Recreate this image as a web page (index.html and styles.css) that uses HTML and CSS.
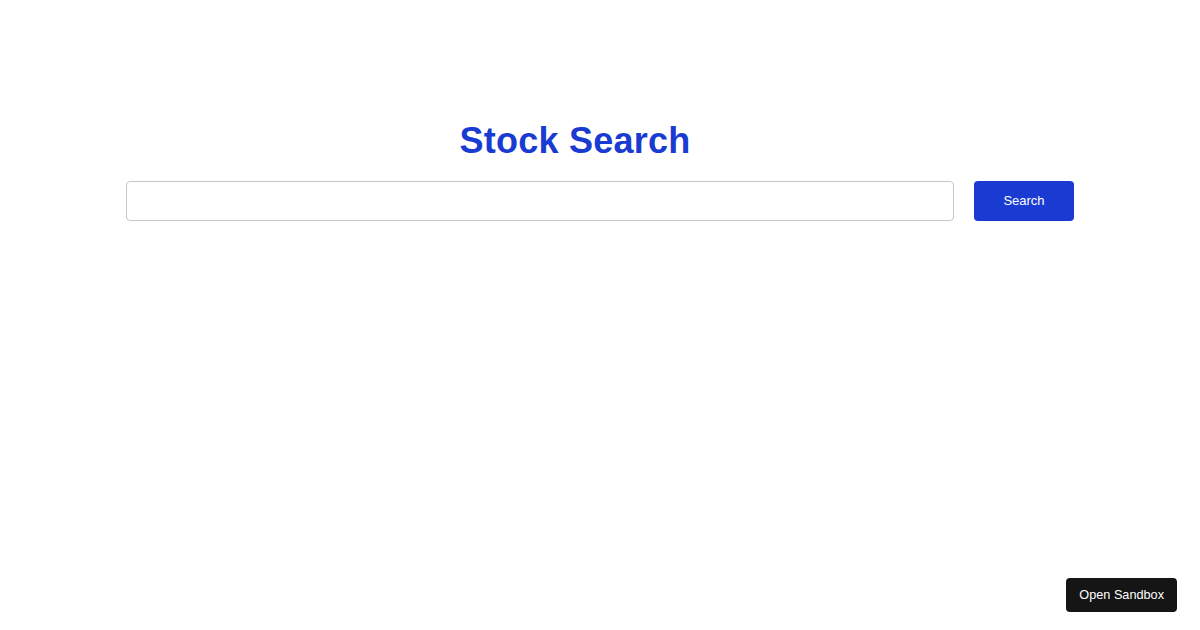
FILE: index.html
```html
<!DOCTYPE html>
<html>
<head>
<meta charset="utf-8">
<link rel="stylesheet" href="styles.css">
</head>
<body>
<main class="page">
  <h1 class="title">Stock Search</h1>
  <form class="search">
    <input class="search-input" type="text">
    <button class="search-btn" type="button">Search</button>
  </form>
</main>
<button class="sandbox-btn" type="button">Open Sandbox</button>
</body>
</html>
```

FILE: styles.css
```css
html, body {
  margin: 0;
  padding: 0;
  background: #ffffff;
  font-family: "Liberation Sans", Arial, sans-serif;
}
.page {
  width: 948px;
  margin: 0 auto;
  padding-top: 120px;
}
.title {
  margin: 0 50px 0 0;
  text-align: center;
  font-size: 36px;
  font-weight: 700;
  line-height: 42px;
  letter-spacing: 0.25px;
  color: #1a3bd1;
}
.search {
  display: flex;
  gap: 20px;
  margin-top: 19px;
}
.search-input {
  flex: 1;
  height: 40px;
  box-sizing: border-box;
  border: 1px solid #c6c6c6;
  border-radius: 4px;
  padding: 0 10px;
  font-size: 14px;
  font-family: inherit;
  outline: none;
}
.search-btn {
  width: 100px;
  height: 40px;
  border: none;
  border-radius: 4px;
  background: #1a3bd1;
  color: #ffffff;
  font-family: inherit;
  font-size: 13px;
  line-height: 39px;
  padding: 0 0 1px;
}
.sandbox-btn {
  position: fixed;
  right: 23px;
  bottom: 18px;
  height: 34px;
  padding: 0 13px;
  border: none;
  border-radius: 4px;
  background: #151515;
  color: #ffffff;
  font-family: inherit;
  font-size: 12.7px;
}
```
